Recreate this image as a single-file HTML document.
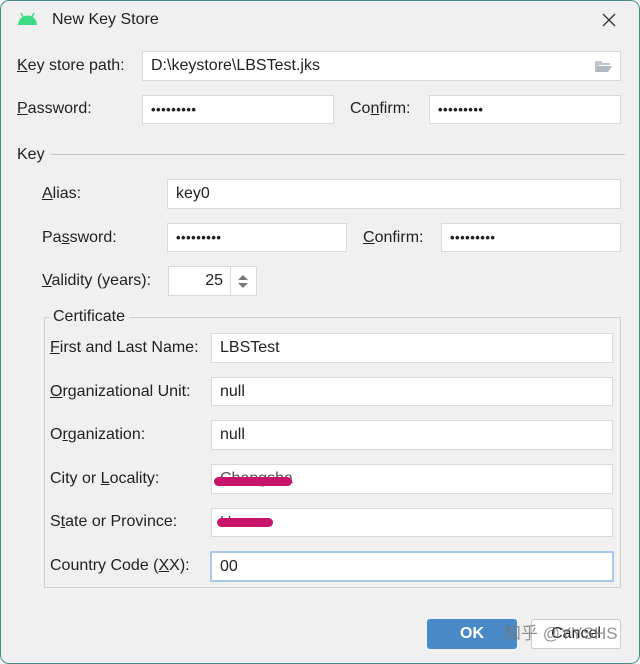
<!DOCTYPE html>
<html><head><meta charset="utf-8"><style>
*{margin:0;padding:0;box-sizing:border-box}
body{width:640px;height:664px;background:#fff;font-family:"Liberation Sans","Noto Sans CJK SC",sans-serif;font-size:16px;color:#222;position:relative;overflow:hidden}
.win{position:absolute;left:0;top:0;width:640px;height:664px;background:#f0f0f0;border:1.5px solid #3f8f86;border-radius:9px}
.a{position:absolute;white-space:nowrap}
.f{position:absolute;background:#fff;border:1px solid #d9d9d9;padding-left:8px;line-height:27px;font-size:16px}
.l{position:absolute;white-space:nowrap;line-height:18px}
u{text-decoration:underline}
.dots{letter-spacing:0.5px;font-weight:bold;font-size:13px}
.red{position:absolute;height:9px;background:#c8136a;border-radius:5px}
</style></head><body><div class="win">
<svg class="a" style="left:16px;top:11px" width="21" height="14" viewBox="0 0 21 14"><path d="M1 13 A9.5 9.5 0 0 1 20 13 Z" fill="#3ddc84"/><line x1="4" y1="1" x2="6" y2="5" stroke="#3ddc84" stroke-width="1.5"/><line x1="17" y1="1" x2="15" y2="5" stroke="#3ddc84" stroke-width="1.5"/></svg>
<div class="l" style="left:51px;top:10px;font-size:16px">New Key Store</div>
<svg class="a" style="left:601px;top:12px" width="14" height="14"><path d="M1 1L13 13M13 1L1 13" stroke="#333" stroke-width="1.3"/></svg>

<div class="l" style="left:16px;top:56px"><u>K</u>ey store path:</div>
<div class="f" style="left:141px;top:50px;width:479px;height:30px">D:\keystore\LBSTest.jks</div>
<svg class="a" style="left:593px;top:58px" width="18" height="14"><path d="M1 2h6l2 2h7v2H5L1 13Z" fill="#c0c6cc"/><path d="M4 7h14l-4 6H1Z" fill="#b0b8c0"/></svg>

<div class="l" style="left:16px;top:99px"><u>P</u>assword:</div>
<div class="f dots" style="left:141px;top:94px;width:192px;height:29px">•••••••••</div>
<div class="l" style="left:349px;top:99px">Co<u>n</u>firm:</div>
<div class="f dots" style="left:428px;top:94px;width:192px;height:29px">•••••••••</div>

<div class="l" style="left:16px;top:145px">Key</div>
<div class="a" style="left:50px;top:153px;width:574px;height:1px;background:#c8c8c8"></div>

<div class="l" style="left:41px;top:184px"><u>A</u>lias:</div>
<div class="f" style="left:166px;top:178px;width:454px;height:30px">key0</div>
<div class="l" style="left:41px;top:228px">Pa<u>s</u>sword:</div>
<div class="f dots" style="left:166px;top:222px;width:180px;height:29px">•••••••••</div>
<div class="l" style="left:362px;top:228px"><u>C</u>onfirm:</div>
<div class="f dots" style="left:440px;top:222px;width:180px;height:29px">•••••••••</div>

<div class="l" style="left:41px;top:271px"><u>V</u>alidity (years):</div>
<div class="f" style="left:167px;top:265px;width:89px;height:30px;padding:0"><span class="a" style="left:0;width:54px;text-align:right">25</span><div class="a" style="left:61px;top:0;width:1px;height:28px;background:#ddd"></div>
<svg class="a" style="left:68px;top:7px" width="12" height="15"><path d="M1 6L6 1L11 6Z M1 9L6 14L11 9Z" fill="#777"/></svg></div>

<div class="a" style="left:43px;top:316px;width:577px;height:271px;border:1px solid #d0d0d0"></div>
<div class="l" style="left:48px;top:307px;background:#f0f0f0;padding:0 4px">Certificate</div>

<div class="l" style="left:49px;top:338px"><u>F</u>irst and Last Name:</div>
<div class="f" style="left:210px;top:332px;width:402px;height:30px">LBSTest</div>
<div class="l" style="left:49px;top:382px"><u>O</u>rganizational Unit:</div>
<div class="f" style="left:210px;top:376px;width:402px;height:29px">null</div>
<div class="l" style="left:49px;top:425px">O<u>r</u>ganization:</div>
<div class="f" style="left:210px;top:419px;width:402px;height:30px">null</div>
<div class="l" style="left:49px;top:469px">City or <u>L</u>ocality:</div>
<div class="f" style="left:210px;top:463px;width:402px;height:30px;color:#555">Changsha</div>
<div class="red" style="left:213px;top:476px;width:78px"></div>
<div class="l" style="left:49px;top:512px">S<u>t</u>ate or Province:</div>
<div class="f" style="left:210px;top:507px;width:402px;height:29px;color:#555">Hunan</div>
<div class="red" style="left:216px;top:517px;width:56px"></div>
<div class="l" style="left:49px;top:556px">Country Code (<u>X</u>X):</div>
<div class="f" style="left:209px;top:550px;width:404px;height:31px;border:2px solid #a9c8ea;line-height:27px">00</div>

<div class="a" style="left:426px;top:618px;width:90px;height:30px;background:#4a89c8;border-radius:3px;color:#fff;font-weight:bold;text-align:center;line-height:30px">OK</div>
<div class="a" style="left:530px;top:618px;width:90px;height:30px;background:#fff;border:1px solid #ccc;border-radius:3px;text-align:center;line-height:28px">Cancel</div>
<div class="l" style="left:503px;top:624px;color:rgba(120,120,120,.8);font-size:17px">知乎 @YYSHS</div>
</div></body></html>
